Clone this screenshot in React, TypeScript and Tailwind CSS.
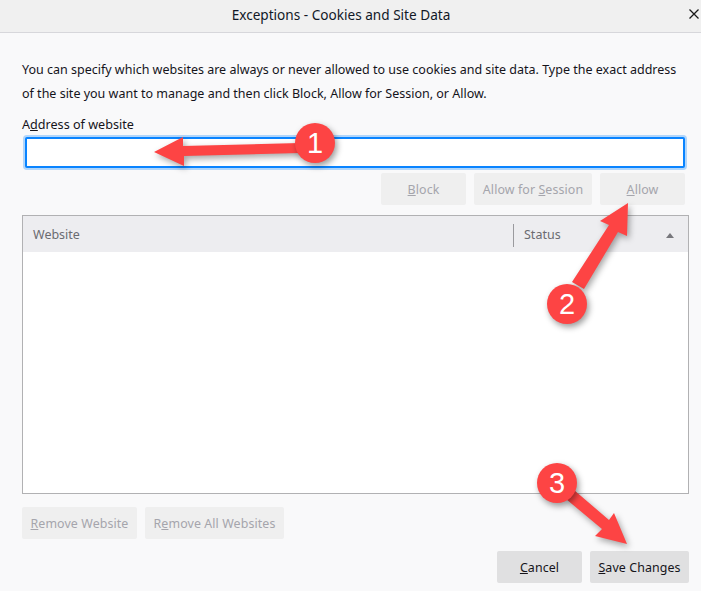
const font = { fontFamily: '"Noto Sans", sans-serif' };

function Btn({
  children,
  disabled,
  className,
}: {
  children: React.ReactNode;
  disabled?: boolean;
  className: string;
}) {
  return (
    <button
      className={`flex h-[32px] items-center justify-center rounded-[2px] pt-[2px] text-[12.4px] tracking-[0.1px] ${
        disabled ? "bg-[#efefef] text-[#a5a5ac]" : "bg-[#e0e0e1] text-[#15141a]"
      } ${className}`}
    >
      {children}
    </button>
  );
}

function Badge({ n, className }: { n: number; className: string }) {
  return (
    <div
      className={`absolute flex h-[40px] w-[40px] items-center justify-center rounded-full bg-[#fd4444] text-[29px] leading-none text-white shadow-[2px_3px_6px_rgba(0,0,0,0.4)] ${className}`}
      style={{ fontFamily: '"Liberation Sans", sans-serif' }}
    >
      {n}
    </div>
  );
}

export default function App() {
  return (
    <div
      className="relative h-[591px] w-[701px] overflow-hidden bg-[#f9f9fa] text-[12.5px] text-[#15141a]"
      style={font}
    >
      <div className="relative flex h-[33px] items-center justify-center border-b border-[#d7d7db] bg-[#f0f0f0] pb-[2px] text-[13.6px] text-[#111827]">
        <span className="ml-[-19px]">Exceptions - Cookies and Site Data</span>
        <svg
          className="absolute right-[2px] top-[9px]"
          width="10"
          height="10"
          viewBox="0 0 10 10"
        >
          <path d="M0.5 0.5L9.5 9.5M9.5 0.5L0.5 9.5" stroke="#1a1a1a" strokeWidth="1.3" />
        </svg>
      </div>

      <div className="flex flex-col px-[22px]">
        <p className="mt-[25px] w-[662px] text-[12.5px] leading-[24px]">
          You can specify which websites are always or never allowed to use cookies and site data. Type the exact address of the site you want to manage and then click Block, Allow for Session, or Allow.
        </p>

        <label className="mt-[10px] h-[18px] text-[12.6px] leading-[18px]">
          A<u>d</u>dress of website
        </label>
        <div className="ml-[3px] mt-[3px] h-[31px] w-[660px] rounded-[2px] border-2 border-[#0a84ff] bg-white shadow-[0_0_0_2px_rgba(10,132,255,0.3)]" />

        <div className="mr-[-6px] mt-[5px] flex justify-end gap-[8px]">
          <Btn disabled className="w-[85px]">
            <span><u>B</u>lock</span>
          </Btn>
          <Btn disabled className="w-[118px]">
            <span>Allow for <u>S</u>ession</span>
          </Btn>
          <Btn disabled className="w-[85px]">
            <span><u>A</u>llow</span>
          </Btn>
        </div>

        <div className="mt-[10px] flex h-[279px] w-[667px] flex-col border border-[#b1b1b3] bg-white">
          <div className="flex h-[36px] items-center bg-[#ededf0] pt-[2px] text-[#6b6b70]">
            <div className="w-[490px] pl-[10px]">Website</div>
            <div className="h-[23px] w-px bg-[#9a9a9e]" />
            <div className="flex-1 pl-[10px]">Status</div>
            <div className="mr-[14px] h-0 w-0 border-x-[4.5px] border-b-[5px] border-x-transparent border-b-[#77777c]" />
          </div>
        </div>

        <div className="mt-[13px] flex gap-[8px]">
          <Btn disabled className="w-[115px]">
            <span><u>R</u>emove Website</span>
          </Btn>
          <Btn disabled className="w-[139px]">
            <span>R<u>e</u>move All Websites</span>
          </Btn>
        </div>

        <div className="mr-[-10px] mt-[12px] flex justify-end gap-[8px]">
          <Btn className="w-[85px]">
            <span><u>C</u>ancel</span>
          </Btn>
          <Btn className="w-[99px]">
            <span><u>S</u>ave Changes</span>
          </Btn>
        </div>
      </div>

      <svg
        className="absolute left-0 top-0 drop-shadow-[2px_3px_3px_rgba(0,0,0,0.35)]"
        width="701"
        height="591"
        viewBox="0 0 701 591"
      >
        <polygon
          points="154,152 183,137 183,146 300,143 300,153 184,156 184,166"
          fill="#fd4444"
        />
        <polygon
          points="628,203 627,236 618,232 584,289 572,282 609,225 600,221"
          fill="#fd4444"
        />
        <polygon
          points="627,544 595,536 602,529 566,499 574,490 609,520 614,513"
          fill="#fd4444"
        />
      </svg>
      <Badge n={1} className="left-[295px] top-[123px]" />
      <Badge n={2} className="left-[547px] top-[284px]" />
      <Badge n={3} className="left-[537px] top-[463px]" />
    </div>
  );
}
